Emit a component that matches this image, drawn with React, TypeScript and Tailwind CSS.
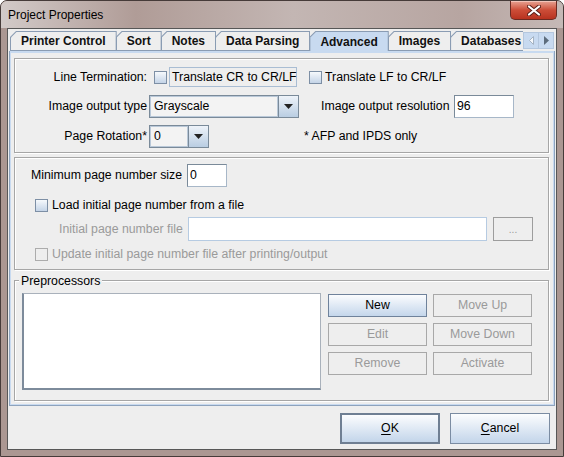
import React from 'react'

const tabs = ['Printer Control', 'Sort', 'Notes', 'Data Parsing', 'Advanced', 'Images', 'Databases']

const etched = 'border border-[#a6a6a6] shadow-[inset_1px_1px_0_#ffffff,1px_1px_0_#ffffff]'

function Tab({ label, active, first }: { label: string; active?: boolean; first?: boolean }) {
  return (
    <div
      className={`shrink-0 h-[20px] px-px pt-px bg-[#8a9cb3] [clip-path:polygon(6px_0,100%_0,100%_100%,0_100%,0_6px)] ${
        active ? 'pb-0' : 'pb-px'
      } ${first ? '' : '-ml-px'}`}
    >
      <div
        className={`h-full flex items-center px-[10px] font-bold text-[12px] text-[#111] [clip-path:polygon(5.5px_0,100%_0,100%_100%,0_100%,0_5.5px)] ${
          active ? 'bg-[#c8daf0]' : 'bg-[#eeeeee]'
        }`}
      >
        {label}
      </div>
    </div>
  )
}

function Check({ disabled, className = '' }: { disabled?: boolean; className?: string }) {
  return (
    <span
      className={`shrink-0 w-[13px] h-[13px] border ${
        disabled
          ? 'border-[#acacac] bg-[#eeeeee]'
          : 'border-[#7d8fa5] bg-linear-to-b from-[#f6f9fc] to-[#c4d4e7]'
      } ${className}`}
    />
  )
}

function Arrow() {
  return (
    <svg width="9" height="5" viewBox="0 0 9 5">
      <path d="M0 0h9L4.5 5z" fill="#222" />
    </svg>
  )
}

function Combo({ value, width }: { value: string; width: string }) {
  return (
    <div className={`flex h-[23px] border border-[#7a8a99] ${width}`}>
      <div className="flex-1 flex items-center pl-[3px] bg-[#f3f3f3] border border-[#b9c8d8]">{value}</div>
      <div className="w-[20px] flex items-center justify-center border-l border-[#7a8a99] bg-linear-to-b from-[#eef3f9] to-[#b9cde2]">
        <Arrow />
      </div>
    </div>
  )
}

function Btn({ label, enabled }: { label: string; enabled?: boolean }) {
  return (
    <div
      className={`h-[23px] flex items-center justify-center border ${
        enabled
          ? 'border-[#6f829b] bg-linear-to-b from-[#fbfcfe] to-[#c4d6eb] text-black'
          : 'border-[#a8a8a8] text-[#9a9a9a]'
      }`}
    >
      {label}
    </div>
  )
}

export default function App() {
  return (
    <div className="w-[564px] h-[457px] flex flex-col overflow-hidden rounded-t-[7px] border border-[#463b39] bg-[#ab9792] [font-family:'Liberation_Sans',Arial,sans-serif] text-[12.3px] text-black whitespace-nowrap">
      <div className="h-[27px] shrink-0 flex bg-[linear-gradient(90deg,#d2cac8_0%,#b09c97_24%,#c3b6b3_52%,#b7a5a1_82%,#c5b9b6_100%)]">
        <span className="self-center pl-[7px] text-[12px] text-black">Project Properties</span>
        <div className="ml-auto mr-[6px] w-[47px] h-[19px] flex items-center justify-center rounded-b-[5px] border border-t-0 border-[#6b2a22] bg-linear-to-b from-[#e6a293] via-[#cc4d38] to-[#b8321f] shadow-[inset_0_1px_0_#f3c4b9]">
          <svg width="14" height="11" viewBox="0 0 14 11">
            <path d="M2 1.5l10 8M12 1.5l-10 8" stroke="#5a1f18" strokeWidth="4" strokeLinecap="round" />
            <path d="M2 1.5l10 8M12 1.5l-10 8" stroke="#ffffff" strokeWidth="2.2" strokeLinecap="round" />
          </svg>
        </div>
      </div>

      <div className="flex-1 mx-[6px] mb-[6px] flex flex-col border border-[#575757] bg-[#eeeeee] px-px pt-[2px]">
        <div className="h-[20px] shrink-0 flex">
          <div className="ml-px w-[513px] flex overflow-hidden">
            {tabs.map((t, i) => (
              <Tab key={t} label={t} active={t === 'Advanced'} first={i === 0} />
            ))}
          </div>
          <div className="mt-px h-[17px] w-[16px] flex items-center justify-center border border-[#b4c7de] bg-[#c8daf0]">
            <svg width="5" height="9" viewBox="0 0 5 9">
              <path d="M4.5 0.5v8L0.5 4.5z" fill="#f5f8fc" stroke="#a5b3c2" />
            </svg>
          </div>
          <div className="mt-px h-[17px] w-[15px] flex items-center justify-center border border-l-0 border-[#b4c7de] bg-[#c8daf0]">
            <svg width="5" height="9" viewBox="0 0 5 9">
              <path d="M0 0v9L5 4.5z" fill="#5d6c7c" />
            </svg>
          </div>
        </div>

        <div className="h-[355px] shrink-0 flex flex-col border-x border-b border-[#8ea3bd]">
          <div className="h-[2px] bg-[#c8daf0]" />
          <div className="flex-1 flex flex-col bg-[#eeeeee] pt-[5px] pl-[4px] pr-[5px] shadow-[inset_1px_0_0_#c8daf0,inset_-1px_0_0_#c8daf0,inset_0_-1px_0_#c8daf0]">
            <div className={`h-[95px] shrink-0 pt-[8px] ${etched}`}>
              <div className="h-[20px] flex items-center">
                <span className="w-[132px] text-right">Line Termination:</span>
                <Check className="ml-[7px]" />
                <span className="ml-[2px] w-[128px] h-[20px] flex items-center pl-[2px] border border-[#a9bdd3]">
                  Translate CR to CR/LF
                </span>
                <Check className="ml-[12px]" />
                <span className="ml-[3px]">Translate LF to CR/LF</span>
              </div>
              <div className="mt-[8px] h-[23px] flex items-center">
                <span className="w-[132px] text-right">Image output type</span>
                <div className="ml-[2px]">
                  <Combo value="Grayscale" width="w-[150px]" />
                </div>
                <span className="ml-[22px] w-[130px]">Image output resolution</span>
                <div className="ml-[3px] w-[60px] h-[23px] flex items-center pl-[2px] bg-white border border-[#a7b7c8] border-t-[#7a8a99] border-l-[#7a8a99]">
                  96
                </div>
              </div>
              <div className="mt-[7px] h-[23px] flex items-center">
                <span className="w-[132px] text-right">Page Rotation*</span>
                <div className="ml-[2px]">
                  <Combo value="0" width="w-[60px]" />
                </div>
                <span className="ml-[95px]">* AFP and IPDS only</span>
              </div>
            </div>

            <div className={`mt-[4px] h-[113px] shrink-0 pt-[6px] ${etched}`}>
              <div className="h-[23px] flex items-center pl-[16px]">
                <span className="w-[156px]">Minimum page number size</span>
                <div className="w-[40px] h-[23px] flex items-center pl-[2px] bg-white border border-[#a7b7c8] border-t-[#7a8a99] border-l-[#7a8a99]">
                  0
                </div>
              </div>
              <div className="mt-[10px] h-[16px] flex items-center pl-[20px]">
                <Check />
                <span className="ml-[4px]">Load initial page number from a file</span>
              </div>
              <div className="mt-[4px] h-[24px] flex items-center pl-[44px]">
                <span className="w-[129px] text-[#9a9a9a]">Initial page number file</span>
                <div className="w-[299px] h-[24px] bg-white border border-[#b6cbe2]" />
                <div className="ml-[6px] w-[40px] h-[24px] flex items-center justify-center border border-[#9d9d9d] text-[10px] text-[#9a9a9a]">
                  ...
                </div>
              </div>
              <div className="mt-[5px] h-[16px] flex items-center pl-[20px]">
                <Check disabled />
                <span className="ml-[4px] text-[#9a9a9a]">Update initial page number file after printing/output</span>
              </div>
            </div>

            <div className={`mt-[10px] h-[121px] shrink-0 ${etched}`}>
              <div className="-mt-[7px] ml-[4px] w-fit px-[2px] leading-[14px] bg-[#eeeeee]">Preprocessors</div>
              <div className="mt-[5px] ml-[7px] flex">
                <div className="w-[299px] h-[97px] bg-white border border-[#a9b1bb] border-l-2 border-b-2 border-l-[#7d8b9b] border-b-[#7d8b9b]" />
                <div className="ml-[7px] mt-px h-fit grid grid-cols-[99px_99px] gap-x-[6px] gap-y-[6px]">
                  <Btn label="New" enabled />
                  <Btn label="Move Up" />
                  <Btn label="Edit" />
                  <Btn label="Move Down" />
                  <Btn label="Remove" />
                  <Btn label="Activate" />
                </div>
              </div>
            </div>
          </div>
        </div>

        <div className="flex-1 flex justify-end items-start pt-[7px] pr-[5px] gap-[10px]">
          <div className="w-[100px] h-[31px] flex items-center justify-center border-2 border-[#6f7f93] bg-linear-to-b from-[#fcfdfe] to-[#c3d5ea]">
            <span>
              <span className="underline underline-offset-2">O</span>K
            </span>
          </div>
          <div className="w-[100px] h-[31px] flex items-center justify-center border border-[#7b8ca2] bg-linear-to-b from-[#fcfdfe] to-[#c3d5ea]">
            <span>
              <span className="underline underline-offset-2">C</span>ancel
            </span>
          </div>
        </div>
      </div>
    </div>
  )
}
